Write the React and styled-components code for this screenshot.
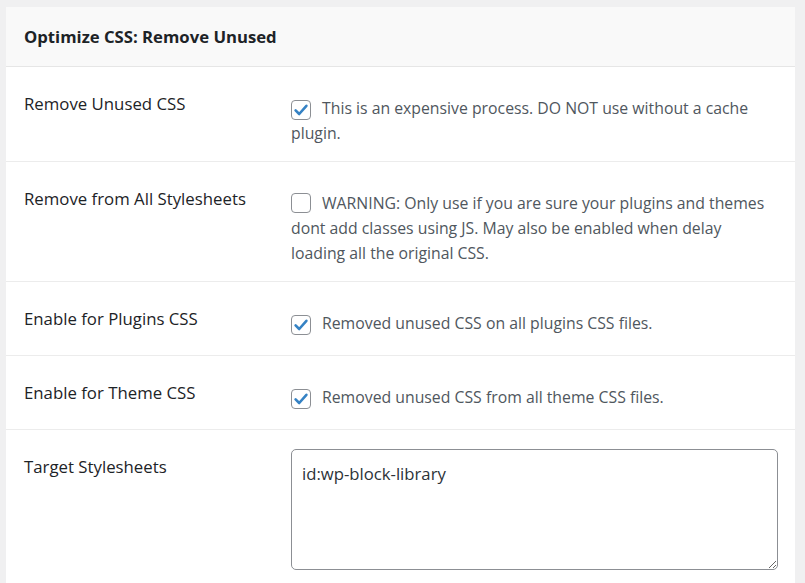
import React from 'react'
import styled, { createGlobalStyle } from 'styled-components'

const Global = createGlobalStyle`
    html, body {
        margin: 0;
        padding: 0;
        background: #f0f0f1;
    }
    body {
        font-family: "Open Sans", "Noto Sans", sans-serif;
        color: #1d2327;
    }
`

const rows = [
    {
        label: 'Remove Unused CSS',
        checked: true,
        text: 'This is an expensive process. DO NOT use without a cache plugin.',
    },
    {
        label: 'Remove from All Stylesheets',
        checked: false,
        text: 'WARNING: Only use if you are sure your plugins and themes dont add classes using JS. May also be enabled when delay loading all the original CSS.',
    },
    {
        label: 'Enable for Plugins CSS',
        checked: true,
        text: 'Removed unused CSS on all plugins CSS files.',
    },
    {
        label: 'Enable for Theme CSS',
        checked: true,
        text: 'Removed unused CSS from all theme CSS files.',
    },
]

function Check({ checked }) {
    return (
        <Box>
            {checked && (
                <svg width="16" height="16" viewBox="0 0 16 16">
                    <path d="M2.6 8.4 L6.2 12 L13.4 3.8" fill="none" stroke="#3582c4" strokeWidth="2.6" strokeLinecap="round" strokeLinejoin="round" />
                </svg>
            )}
        </Box>
    )
}

export default function App() {
    return (
        <>
            <Global />
            <Page>
                <Panel>
                    <Header>Optimize CSS: Remove Unused</Header>
                    {rows.map((r) => (
                        <Row key={r.label}>
                            <Label>{r.label}</Label>
                            <Value>
                                <Option>
                                    <Check checked={r.checked} />
                                    {r.text}
                                </Option>
                            </Value>
                        </Row>
                    ))}
                    <Row last>
                        <Label>Target Stylesheets</Label>
                        <Value>
                            <Textarea defaultValue="id:wp-block-library" />
                        </Value>
                    </Row>
                </Panel>
            </Page>
        </>
    )
}

const Page = styled.div`
    display: flex;
    flex-direction: column;
    padding: 7px 10px 0 6px;
    height: 583px;
    box-sizing: border-box;
    overflow: hidden;`
const Panel = styled.div`
    flex: 1;
    background: #fff;`
const Header = styled.h2`
    margin: 0;
    height: 60px;
    box-sizing: border-box;
    padding-left: 18px;
    display: flex;
    align-items: center;
    background: #f9f9f9;
    border-bottom: 1px solid #e6e6e6;
    font-size: 16.7px;
    font-weight: 700;
    color: #1d2327;`
const Row = styled.div`
    display: grid;
    grid-template-columns: 285px 1fr;
    border-bottom: ${(p) => (p.last ? 'none' : '1px solid #ececec')};`
const Label = styled.div`
    padding: 25px 10px 25px 18px;
    font-size: 16.8px;
    line-height: 23px;
    color: #1d2327;`
const Value = styled.div`
    padding: 19px 17px 15px 0;`
const Option = styled.div`
    margin-top: 10px;
    font-size: 15.8px;
    line-height: 25px;
    color: #50575e;`
const Box = styled.span`
    display: inline-flex;
    align-items: center;
    justify-content: center;
    width: 20px;
    height: 20px;
    box-sizing: border-box;
    border: 1px solid #8c8f94;
    border-radius: 4px;
    background: #fff;
    vertical-align: -4px;
    margin-right: 11px;`
const Textarea = styled.textarea`
    display: block;
    width: 487px;
    height: 121px;
    box-sizing: border-box;
    border: 1px solid #8c8f94;
    border-radius: 5px;
    padding: 12px 10px;
    font-family: "Open Sans", "Noto Sans", sans-serif;
    font-size: 16.7px;
    line-height: 24px;
    color: #2c3338;
    resize: vertical;
    outline: none;`
